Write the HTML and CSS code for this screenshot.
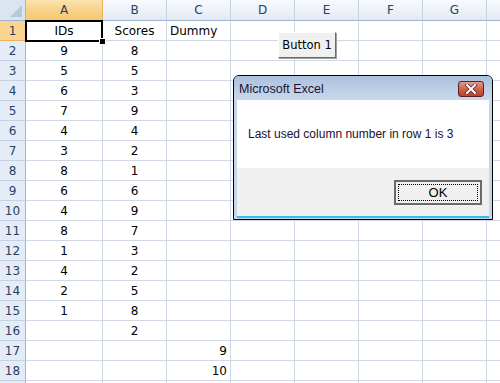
FILE: index.html
```html
<!DOCTYPE html>
<html lang="en">

<head>
    <meta charset="UTF-8">
    <title>Book1 - Last used column</title>
    <link rel="stylesheet" href="styles.css">
</head>

<body>
    <div class="window">
    <div class="sheet">
        <div class="corner"><span class="tri"></span></div>
        <div class="colhead sel">A</div>
        <div class="colhead">B</div>
        <div class="colhead">C</div>
        <div class="colhead">D</div>
        <div class="colhead">E</div>
        <div class="colhead">F</div>
        <div class="colhead">G</div>
        <div class="colhead"></div>

        <div class="rowhead sel">1</div><div class="c mid">IDs</div><div class="c mid">Scores</div><div class="c">Dummy</div><div class="c"></div><div class="c"></div><div class="c"></div><div class="c"></div><div class="c"></div>
        <div class="rowhead">2</div><div class="c mid">9</div><div class="c mid">8</div><div class="c"></div><div class="c"></div><div class="c"></div><div class="c"></div><div class="c"></div><div class="c"></div>
        <div class="rowhead">3</div><div class="c mid">5</div><div class="c mid">5</div><div class="c"></div><div class="c"></div><div class="c"></div><div class="c"></div><div class="c"></div><div class="c"></div>
        <div class="rowhead">4</div><div class="c mid">6</div><div class="c mid">3</div><div class="c"></div><div class="c"></div><div class="c"></div><div class="c"></div><div class="c"></div><div class="c"></div>
        <div class="rowhead">5</div><div class="c mid">7</div><div class="c mid">9</div><div class="c"></div><div class="c"></div><div class="c"></div><div class="c"></div><div class="c"></div><div class="c"></div>
        <div class="rowhead">6</div><div class="c mid">4</div><div class="c mid">4</div><div class="c"></div><div class="c"></div><div class="c"></div><div class="c"></div><div class="c"></div><div class="c"></div>
        <div class="rowhead">7</div><div class="c mid">3</div><div class="c mid">2</div><div class="c"></div><div class="c"></div><div class="c"></div><div class="c"></div><div class="c"></div><div class="c"></div>
        <div class="rowhead">8</div><div class="c mid">8</div><div class="c mid">1</div><div class="c"></div><div class="c"></div><div class="c"></div><div class="c"></div><div class="c"></div><div class="c"></div>
        <div class="rowhead">9</div><div class="c mid">6</div><div class="c mid">6</div><div class="c"></div><div class="c"></div><div class="c"></div><div class="c"></div><div class="c"></div><div class="c"></div>
        <div class="rowhead">10</div><div class="c mid">4</div><div class="c mid">9</div><div class="c"></div><div class="c"></div><div class="c"></div><div class="c"></div><div class="c"></div><div class="c"></div>
        <div class="rowhead">11</div><div class="c mid">8</div><div class="c mid">7</div><div class="c"></div><div class="c"></div><div class="c"></div><div class="c"></div><div class="c"></div><div class="c"></div>
        <div class="rowhead">12</div><div class="c mid">1</div><div class="c mid">3</div><div class="c"></div><div class="c"></div><div class="c"></div><div class="c"></div><div class="c"></div><div class="c"></div>
        <div class="rowhead">13</div><div class="c mid">4</div><div class="c mid">2</div><div class="c"></div><div class="c"></div><div class="c"></div><div class="c"></div><div class="c"></div><div class="c"></div>
        <div class="rowhead">14</div><div class="c mid">2</div><div class="c mid">5</div><div class="c"></div><div class="c"></div><div class="c"></div><div class="c"></div><div class="c"></div><div class="c"></div>
        <div class="rowhead">15</div><div class="c mid">1</div><div class="c mid">8</div><div class="c"></div><div class="c"></div><div class="c"></div><div class="c"></div><div class="c"></div><div class="c"></div>
        <div class="rowhead">16</div><div class="c"></div><div class="c mid">2</div><div class="c"></div><div class="c"></div><div class="c"></div><div class="c"></div><div class="c"></div><div class="c"></div>
        <div class="rowhead">17</div><div class="c"></div><div class="c"></div><div class="c right">9</div><div class="c"></div><div class="c"></div><div class="c"></div><div class="c"></div><div class="c"></div>
        <div class="rowhead">18</div><div class="c"></div><div class="c"></div><div class="c right">10</div><div class="c"></div><div class="c"></div><div class="c"></div><div class="c"></div><div class="c"></div>
        <div class="rowhead"></div><div class="c"></div><div class="c"></div><div class="c"></div><div class="c"></div><div class="c"></div><div class="c"></div><div class="c"></div><div class="c"></div>
    </div>
    </div>

    <!-- active cell A1 -->
    <div class="active"><span class="handle"></span></div>

    <button class="formbtn">Button 1</button>

    <div class="msgbox">
        <div class="titlebar">
            <span class="title">Microsoft Excel</span>
            <span class="close">
                <svg width="14" height="10" viewBox="0 0 14 10">
                    <path d="M3 1 L11 9 M11 1 L3 9" stroke="#4a2a2a" stroke-width="3.4" stroke-linecap="square" />
                    <path d="M3 1 L11 9 M11 1 L3 9" stroke="#fff" stroke-width="2" stroke-linecap="square" />
                </svg>
            </span>
        </div>
        <div class="inner">
            <div class="msg">Last used column number in row 1 is 3</div>
            <div class="btnrow">
                <button class="ok"><span class="focus">OK</span></button>
            </div>
        </div>
    </div>
</body>

</html>
```

FILE: styles.css
```css
body {
    margin: 0;
    padding: 0;
    overflow: hidden;
    background: #fff;
    font-family: "DejaVu Sans", sans-serif;
    font-size: 12px;
}

.window {
    width: 500px;
    height: 383px;
    overflow: hidden;
}

.sheet {
    display: grid;
    grid-template-columns: 26px 77px 64px 64px 64px 64px 64px 64px 64px;
    grid-template-rows: 21px;
    grid-auto-rows: 20px;
    width: 551px;
}

.sheet > div {
    box-sizing: border-box;
}

.corner {
    position: relative;
    background: #dbe5f1;
    border-right: 1px solid #9eb6ce;
    border-bottom: 1px solid #9eb6ce;
}

.corner .tri {
    position: absolute;
    right: 3px;
    bottom: 3px;
    width: 0;
    height: 0;
    border-left: 12px solid transparent;
    border-bottom: 12px solid #b7c8dc;
}

.colhead {
    background: linear-gradient(#f8fafd, #e3eaf4);
    border-right: 1px solid #c5d2e3;
    border-bottom: 1px solid #9eb6ce;
    color: #27415f;
    text-align: center;
    line-height: 20px;
}

.colhead.sel {
    background: linear-gradient(#fbe3b2, #f8d28b 50%, #f6c86f);
    border-bottom: 1px solid #f29536;
    border-right: 1px solid #f2b05c;
}

.rowhead {
    background: #e4ecf7;
    border-right: 1px solid #9eb6ce;
    border-bottom: 1px solid #c5d2e3;
    color: #27415f;
    text-align: center;
    line-height: 20px;
}

.rowhead.sel {
    background: #fad591;
    border-right: 1px solid #f29536;
    border-bottom: 1px solid #f2b05c;
}

.c {
    border-right: 1px solid #d0d7e5;
    border-bottom: 1px solid #d0d7e5;
    line-height: 20px;
    padding: 0 3px;
    color: #000;
    white-space: nowrap;
    overflow: hidden;
}

.mid {
    text-align: center;
}

.right {
    text-align: right;
}

.active {
    position: absolute;
    left: 25px;
    top: 20px;
    width: 78px;
    height: 22px;
    box-sizing: border-box;
    border: 2px solid #000;
}

.handle {
    position: absolute;
    right: -5px;
    bottom: -5px;
    width: 5px;
    height: 5px;
    background: #000;
    border: 1px solid #fff;
}

.formbtn {
    position: absolute;
    left: 278px;
    top: 32px;
    width: 58px;
    height: 26px;
    margin: 0;
    padding: 0;
    background: #f0f0f0;
    border: 1px solid;
    border-color: #fff #6b6b6b #6b6b6b #fff;
    box-shadow: 1px 1px 0 #a0a0a0;
    font-family: "DejaVu Sans", sans-serif;
    font-size: 11.5px;
    color: #000;
}

/* message box */
.msgbox {
    position: absolute;
    left: 233px;
    top: 75px;
    width: 260px;
    height: 145px;
    box-sizing: border-box;
    border: 1px solid #000;
    border-radius: 6px 6px 0 0;
    background: #c5d7ec;
    display: flex;
    flex-direction: column;
    font-family: "Liberation Sans", Arial, sans-serif;
    font-size: 12px;
}

.titlebar {
    height: 24px;
    flex-shrink: 0;
    display: flex;
    align-items: center;
    padding: 0 8px 0 5px;
    border-radius: 5px 5px 0 0;
    background: linear-gradient(#a9c1dd, #bdd0e7 60%, #c8d9ed);
}

.title {
    flex: 1;
    color: #1c1230;
    font-size: 12.5px;
    padding-top: 1px;
}

.close {
    width: 26px;
    height: 16px;
    box-sizing: border-box;
    border: 1px solid #5c2020;
    border-radius: 3px;
    background: linear-gradient(#e59a8a, #d0624c 50%, #b8402a);
    display: flex;
    align-items: center;
    justify-content: center;
    margin-top: 2px;
}

.inner {
    flex: 1;
    margin: 0 3px 1px 3px;
    background: #f0f0f0;
    border-bottom: 2px solid #33c0e8;
    display: flex;
    flex-direction: column;
}

.msg {
    height: 68px;
    box-sizing: border-box;
    background: #fff;
    padding: 27px 0 0 11px;
    color: #1a1030;
}

.btnrow {
    flex: 1;
    display: flex;
    justify-content: flex-end;
    padding: 12px 7px 0 0;
}

.ok {
    width: 88px;
    height: 25px;
    margin: 0;
    padding: 2px;
    box-sizing: border-box;
    background: #f0f0f0;
    border: 2px solid #6a6a6a;
    font-family: "Liberation Sans", Arial, sans-serif;
    font-size: 13px;
    color: #000;
}

.focus {
    display: block;
    height: 100%;
    box-sizing: border-box;
    border: 1px dotted #000;
    line-height: 15px;
}
```
